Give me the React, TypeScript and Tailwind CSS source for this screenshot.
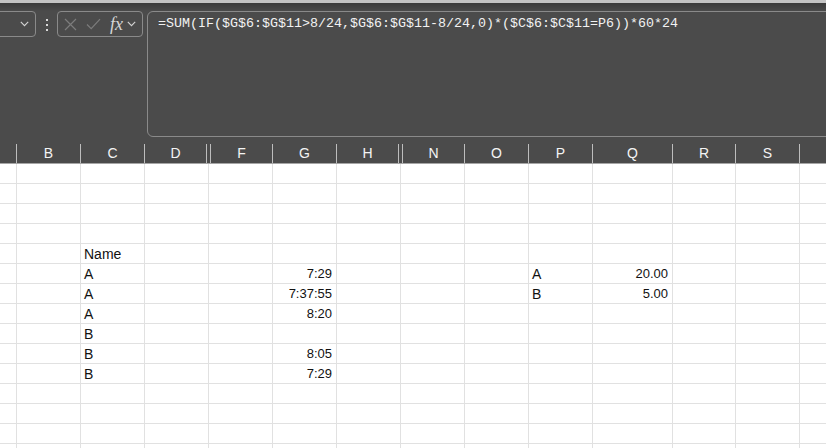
import React from "react";

// column widths incl. the 1px right border (grid body)
const bodyCols = [17, 64, 64, 64, 64, 64, 64, 64, 64, 64, 80, 63, 64, 40];

// header has an extra 4px slot where hidden columns sit (E and I:M)
const headCols: { w: number; label: string }[] = [
  { w: 17, label: "" },
  { w: 64, label: "B" },
  { w: 64, label: "C" },
  { w: 62, label: "D" },
  { w: 4, label: "" },
  { w: 62, label: "F" },
  { w: 64, label: "G" },
  { w: 62, label: "H" },
  { w: 4, label: "" },
  { w: 62, label: "N" },
  { w: 64, label: "O" },
  { w: 64, label: "P" },
  { w: 80, label: "Q" },
  { w: 63, label: "R" },
  { w: 64, label: "S" },
  { w: 40, label: "" },
];

type Cell = { text: string; right?: boolean };
// index into bodyCols: 2 = C, 5 = G, 9 = P, 10 = Q
const rows: Record<number, Record<number, Cell>> = {
  4: { 2: { text: "Name" } },
  5: { 2: { text: "A" }, 5: { text: "7:29", right: true }, 9: { text: "A" }, 10: { text: "20.00", right: true } },
  6: { 2: { text: "A" }, 5: { text: "7:37:55", right: true }, 9: { text: "B" }, 10: { text: "5.00", right: true } },
  7: { 2: { text: "A" }, 5: { text: "8:20", right: true } },
  8: { 2: { text: "B" } },
  9: { 2: { text: "B" }, 5: { text: "8:05", right: true } },
  10: { 2: { text: "B" }, 5: { text: "7:29", right: true } },
};

const FORMULA = "=SUM(IF($G$6:$G$11>8/24,$G$6:$G$11-8/24,0)*($C$6:$C$11=P6))*60*24";

function Chevron() {
  return (
    <svg width="9" height="6" viewBox="0 0 9 6" fill="none">
      <path d="M0.8 0.8 L4.5 4.6 L8.2 0.8" stroke="#d4d4d4" strokeWidth="1.1" />
    </svg>
  );
}

function Toolbar() {
  return (
    <div className="flex h-[134px] items-start bg-[linear-gradient(to_bottom,#3b3b3b,#4b4b4b_8px)] pt-[8px]">
      {/* name box, its left part runs off screen */}
      <div className="ml-[-12px] flex h-[26px] w-[48px] items-center justify-end rounded-[4px] border border-[#8a8a8a] pr-[6px]">
        <Chevron />
      </div>
      <div className="flex w-[21px] flex-col items-center gap-[3px] pt-[8px]">
        <span className="h-[2px] w-[2px] bg-[#d8d8d8]" />
        <span className="h-[2px] w-[2px] bg-[#d8d8d8]" />
        <span className="h-[2px] w-[2px] bg-[#d8d8d8]" />
      </div>
      <div className="flex h-[26px] w-[86px] items-center rounded-[4px] border border-[#8a8a8a] pl-[6px]">
        <svg width="13" height="13" viewBox="0 0 13 13" fill="none">
          <path d="M1 1 L12 12 M12 1 L1 12" stroke="#7c7c7c" strokeWidth="1.2" />
        </svg>
        <svg className="ml-[9px]" width="15" height="12" viewBox="0 0 15 12" fill="none">
          <path d="M1 6.5 L5.2 10.6 L14 1.2" stroke="#7c7c7c" strokeWidth="1.2" />
        </svg>
        <span className="ml-[9px] font-['Liberation_Serif'] text-[18px] italic leading-none text-[#d6d6d6]">fx</span>
        <span className="ml-[4px] flex items-center">
          <Chevron />
        </span>
      </div>
      <div className="ml-[4px] mr-[-10px] h-[126px] flex-1 rounded-bl-[6px] rounded-tl-[6px] border border-[#8a8a8a] pl-[10px] pt-[2px] font-['Liberation_Mono'] text-[13.33px] leading-[20px] whitespace-nowrap text-[#f2f2f2]">
        {FORMULA}
      </div>
    </div>
  );
}

function HeaderRow() {
  return (
    <div className="flex h-[27px] items-end bg-[#4b4b4b] border-b border-[#a6a6a6]">
      {headCols.map((c, i) => (
        <div
          key={i}
          style={{ width: c.w }}
          className="flex h-[19px] shrink-0 items-center justify-center border-r border-[#bdbdbd] pb-[1px] text-[14px] leading-none text-[#f4f4f4]"
        >
          {c.label}
        </div>
      ))}
    </div>
  );
}

function Grid() {
  return (
    <div>
      {Array.from({ length: 15 }).map((_, r) => (
        <div key={r} className="flex h-[20px] border-b border-[#e1e1e1]">
          {bodyCols.map((w, c) => {
            const cell = rows[r]?.[c];
            return (
              <div
                key={c}
                style={{ width: w }}
                className={
                  "flex shrink-0 items-center border-r border-[#e1e1e1] leading-none text-[#111] " +
                  (cell?.right ? "justify-end pr-[4px] text-[13px]" : "pl-[3px] text-[14px]")
                }
              >
                {cell?.text}
              </div>
            );
          })}
        </div>
      ))}
    </div>
  );
}

export default function App() {
  return (
    <div className="h-[448px] w-[826px] overflow-hidden bg-white font-['Liberation_Sans',Arial,sans-serif]">
      <div className="h-[3px] bg-[#c4c4c4]" />
      <Toolbar />
      <HeaderRow />
      <Grid />
    </div>
  );
}
